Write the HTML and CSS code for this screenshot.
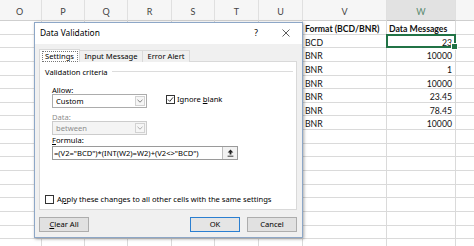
FILE: index.html
```html
<!DOCTYPE html>
<html lang="en">
<head>
<meta charset="utf-8">
<title>Data Validation</title>
<link rel="stylesheet" href="styles.css">
</head>
<body>
<div class="sheet">
  <div class="h">O</div><div class="h">P</div><div class="h">Q</div><div class="h">R</div><div class="h">S</div><div class="h">T</div><div class="h">U</div><div class="h">V</div><div class="h hsel">W</div><div class="h"></div>
  <div></div><div></div><div></div><div></div><div></div><div></div><div></div><div class="v b">Format (BCD/BNR)</div><div class="v b">Data Messages</div><div></div>
  <div></div><div></div><div></div><div></div><div></div><div></div><div></div><div class="v">BCD</div><div class="n sel">23</div><div></div>
  <div></div><div></div><div></div><div></div><div></div><div></div><div></div><div class="v">BNR</div><div class="n">10000</div><div></div>
  <div></div><div></div><div></div><div></div><div></div><div></div><div></div><div class="v">BNR</div><div class="n">1</div><div></div>
  <div></div><div></div><div></div><div></div><div></div><div></div><div></div><div class="v">BNR</div><div class="n">10000</div><div></div>
  <div></div><div></div><div></div><div></div><div></div><div></div><div></div><div class="v">BNR</div><div class="n">23.45</div><div></div>
  <div></div><div></div><div></div><div></div><div></div><div></div><div></div><div class="v">BNR</div><div class="n">78.45</div><div></div>
  <div></div><div></div><div></div><div></div><div></div><div></div><div></div><div class="v">BNR</div><div class="n">10000</div><div></div>
  <div></div><div></div><div></div><div></div><div></div><div></div><div></div><div></div><div></div><div></div>
  <div></div><div></div><div></div><div></div><div></div><div></div><div></div><div></div><div></div><div></div>
  <div></div><div></div><div></div><div></div><div></div><div></div><div></div><div></div><div></div><div></div>
  <div></div><div></div><div></div><div></div><div></div><div></div><div></div><div></div><div></div><div></div>
  <div></div><div></div><div></div><div></div><div></div><div></div><div></div><div></div><div></div><div></div>
  <div></div><div></div><div></div><div></div><div></div><div></div><div></div><div></div><div></div><div></div>
  <div></div><div></div><div></div><div></div><div></div><div></div><div></div><div></div><div></div><div></div>
  <div></div><div></div><div></div><div></div><div></div><div></div><div></div><div></div><div></div><div></div>
  <div></div><div></div><div></div><div></div><div></div><div></div><div></div><div></div><div></div><div></div>
</div>

<div class="dialog">
  <div class="titlebar">
    <span class="title">Data Validation</span>
    <span class="help">?</span>
    <span class="close"><svg width="8" height="8" viewBox="0 0 8 8"><path d="M0.5 0.5L7.5 7.5M7.5 0.5L0.5 7.5" stroke="#333" stroke-width="0.8" fill="none"/></svg></span>
  </div>
  <div class="dbody">
    <div class="tabs">
      <div class="tab active"><span class="focus">Settings</span></div>
      <div class="tab t2">Input Message</div>
      <div class="tab t3">Error Alert</div>
    </div>
    <div class="panel">
      <div class="group"><span>Validation criteria</span><i class="rule"></i></div>
      <div class="criteria">
        <div class="label l1"><u>A</u>llow:</div>
        <div class="row">
          <div class="combo"><span class="ctext">Custom</span><span class="arrow"><svg width="6" height="4" viewBox="0 0 6 4"><path d="M0.5 0.8L3 3.2L5.5 0.8" stroke="#666" stroke-width="0.8" fill="none"/></svg></span></div>
          <div class="check"><span class="box"><svg width="7" height="7" viewBox="0 0 7 7"><path d="M1 3.6L2.8 5.4L6 1.4" stroke="#222" stroke-width="0.9" fill="none"/></svg></span><span>Ignore <u>b</u>lank</span></div>
        </div>
        <div class="label l2 dis">Data:</div>
        <div class="combo dis"><span class="ctext">between</span><span class="arrow"><svg width="6" height="4" viewBox="0 0 6 4"><path d="M0.5 0.8L3 3.2L5.5 0.8" stroke="#999" stroke-width="0.8" fill="none"/></svg></span></div>
        <div class="label l3"><u>F</u>ormula:</div>
        <div class="formula"><span class="ftext">=(V2="BCD")*(INT(W2)=W2)+(V2&lt;&gt;"BCD")</span><span class="ref"><svg width="7" height="8" viewBox="0 0 7 8"><path d="M3.5 0.6L6.3 3.6H4.4V5.6H2.6V3.6H0.7Z" fill="#222"/><path d="M0.6 7.2H6.4" stroke="#222" stroke-width="0.9"/></svg></span></div>
      </div>
      <div class="apply"><span class="box"></span><span>A<u>p</u>ply these changes to all other cells with the same settings</span></div>
    </div>
    <div class="buttons">
      <button class="btn"><u>C</u>lear All</button>
      <span class="spacer"></span>
      <button class="btn ok">OK</button>
      <button class="btn cancel">Cancel</button>
    </div>
  </div>
</div>
</body>
</html>
```

FILE: styles.css
```css
* { box-sizing: border-box; }
html, body { margin: 0; padding: 0; }
body {
  width: 474px;
  height: 246px;
  overflow: hidden;
  position: relative;
  background: #fff;
  font-family: Lato, "Liberation Sans", sans-serif;
}

/* ---------- spreadsheet ---------- */
.sheet {
  display: grid;
  grid-template-columns: 44px 43px 43px 44px 43px 44px 44px 84px 69px 40px;
  grid-template-rows: 21px;
  grid-auto-rows: 13.65px;
  margin-left: -2px;
  width: 498px;
}
.sheet > div {
  border-right: 1px solid #dadada;
  border-bottom: 1px solid #dadada;
  font-size: 8.7px;
  line-height: 13px;
  white-space: nowrap;
  overflow: visible;
  color: #111;
}
.sheet > .h {
  background: #f6f6f6;
  color: #444;
  font-size: 9px;
  line-height: 20px;
  text-align: center;
  border-right-color: #e0e0e0;
  border-bottom-color: #cfcfcf;
  padding-top: 2px;
}
.sheet > .hsel {
  background: #e2e2e2;
  color: #5a8a70;
  border-bottom-color: #bcbcbc;
}
.sheet > .v { padding-left: 2px; padding-top: 1px; }
.sheet > .n { text-align: right; padding-right: 3px; padding-top: 1px; }
.sheet > .b { font-weight: bold; }
.sheet > .sel { position: relative; }
.sheet > .sel::after {
  content: "";
  position: absolute;
  left: -1px; top: -1px; right: -1px; bottom: -1px;
  border: 2px solid #217346;
}
.sheet > .sel::before {
  content: "";
  position: absolute;
  right: -3px; bottom: -3px;
  width: 5px; height: 5px;
  background: #217346;
  border: 1px solid #fff;
  z-index: 1;
}

/* ---------- dialog ---------- */
.dialog {
  position: absolute;
  left: 34px;
  top: 21.5px;
  width: 269px;
  height: 216px;
  border: 1px solid #8da7c7;
  background: #f0f0f0;
  box-shadow: 1px 1px 3px rgba(0, 0, 0, 0.35);
  display: flex;
  flex-direction: column;
  font-family: "Noto Sans", "Open Sans", sans-serif;
  font-size: 7.6px;
  color: #000;
}
.titlebar {
  flex: none;
  height: 21px;
  background: #fff;
  display: flex;
  align-items: center;
  padding-left: 5px;
  padding-bottom: 1px;
}
.title { flex: 1; font-size: 8.4px; }
.help, .close {
  width: 30px;
  text-align: center;
  font-size: 8.5px;
  display: flex;
  justify-content: center;
  align-items: center;
}
.close { margin-right: 1px; }

.dbody {
  flex: 1;
  padding: 6px 5px 0 4px;
  display: flex;
  flex-direction: column;
}
.tabs {
  flex: none;
  display: flex;
  height: 12.5px;
  margin-bottom: -1px;
  position: relative;
  z-index: 1;
}
.tab {
  height: 12.5px;
  border: 1px solid #d9d9d9;
  border-bottom: none;
  background: #f0f0f0;
  display: flex;
  align-items: center;
  justify-content: center;
  line-height: 10px;
  margin-left: -1px;
}
.tab.active {
  width: 41px;
  margin-left: 0;
  background: #fff;
  height: 13.5px;
  margin-top: -1px;
  padding: 1.5px 1.5px 0.5px;
}
.focus {
  flex: 1;
  align-self: stretch;
  display: flex;
  align-items: center;
  justify-content: center;
  border: 1px dotted #777;
}
.t2 { width: 64px; }
.t3 { width: 48px; }

.panel {
  flex: none;
  height: 148.5px;
  background: #fff;
  border: 1px solid #d9d9d9;
  padding: 0 3px 0 5px;
  display: flex;
  flex-direction: column;
}
.group {
  margin-top: 4.5px;
  height: 10px;
  line-height: 10px;
  display: flex;
  align-items: center;
}
.rule {
  flex: 1;
  height: 0;
  border-top: 1px solid #dcdcdc;
  margin-left: 4px;
}
.criteria {
  margin-left: 7px;
  display: flex;
  flex-direction: column;
}
.label { height: 8px; line-height: 8px; }
.l1 { margin-top: 9px; }
.l2 { margin-top: 5.3px; }
.l3 { margin-top: 1.5px; }
.dis { color: #8d8d8d; }

.row { display: flex; align-items: center; }
.combo {
  width: 95px;
  height: 14px;
  border: 1px solid #acacac;
  background: #fff;
  display: flex;
  align-items: center;
  padding: 0 1px 0 3px;
}
.combo.dis { background: #f4f4f4; border-color: #cccccc; margin-top: 0.2px; }
.ctext { flex: 1; line-height: 10px; }
.arrow {
  width: 10px;
  height: 10px;
  border: 1px solid #d2d2d2;
  background: #f6f6f6;
  display: flex;
  align-items: center;
  justify-content: center;
}
.check {
  display: flex;
  align-items: center;
  margin-left: 18.5px;
  margin-top: -3px;
}
.box {
  width: 9px;
  height: 9px;
  border: 1px solid #333;
  background: #fff;
  display: flex;
  align-items: center;
  justify-content: center;
  margin-right: 2.5px;
  flex: none;
}
.formula {
  margin-top: 2px;
  width: 186px;
  height: 14px;
  border: 1px solid #9a9a9a;
  background: #fff;
  display: flex;
  align-items: center;
  padding-left: 1px;
}
.ftext { flex: 1; line-height: 10px; white-space: nowrap; }
.ref {
  width: 15px;
  height: 12px;
  border-left: 1px solid #bdbdbd;
  background: #f2f2f2;
  display: flex;
  align-items: center;
  justify-content: center;
}
.apply {
  margin-top: 34.5px;
  display: flex;
  align-items: center;
  height: 9px;
  line-height: 9px;
}
.apply .box { margin-right: 3px; }

.buttons {
  flex: none;
  display: flex;
  margin-top: 7px;
  height: 15px;
}
.spacer { flex: 1; }
.btn {
  width: 50px;
  height: 15px;
  padding: 0;
  margin: 0;
  border: 1px solid #adadad;
  background: #e1e1e1;
  font: inherit;
  color: #000;
  line-height: 12px;
}
.btn.ok { border-color: #2b7fd1; background: #e5e5e5; }
.btn.cancel { margin-left: 7px; }
```
